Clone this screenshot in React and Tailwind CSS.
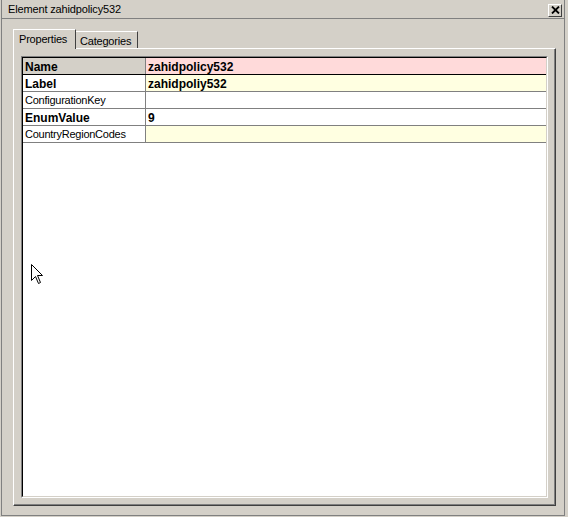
export default function App() {
  const rows = [
    { k: 'Name', v: 'zahidpolicy532', bold: true, kbg: 'bg-[#d4d0c8]', vbg: 'bg-[#ffdada]', line: 'border-black' },
    { k: 'Label', v: 'zahidpoliy532', bold: true, kbg: 'bg-white', vbg: 'bg-[#ffffe1]', line: 'border-[#808080]' },
    { k: 'ConfigurationKey', v: '', bold: false, kbg: 'bg-white', vbg: 'bg-white', line: 'border-[#808080]' },
    { k: 'EnumValue', v: '9', bold: true, kbg: 'bg-white', vbg: 'bg-white', line: 'border-[#808080]' },
    { k: 'CountryRegionCodes', v: '', bold: false, kbg: 'bg-white', vbg: 'bg-[#ffffe1]', line: 'border-[#808080]' },
  ];
  return (
    <div
      className="relative w-[568px] h-[517px] bg-[#d4d0c8] pl-[1px] pr-[3px] pb-[1px] text-[11px] text-black"
      style={{ fontFamily: '"Liberation Sans", Arial, sans-serif' }}
    >
      <div className="h-full border-l border-r border-b border-[#808080] flex flex-col">
        <div className="h-[19px] border-b border-[#808080] flex items-center justify-between pl-[6px] pr-[2px]">
          <span className="leading-none tracking-[-0.15px] pt-[1px]">Element zahidpolicy532</span>
          <div className="w-[14px] h-[13px] mt-[2px] border-t border-l border-white border-r border-b border-r-[#404040] border-b-[#404040] flex items-center justify-center">
            <svg width="9" height="8" viewBox="0 0 9 8">
              <path d="M1 0.5 L8 7.5 M8 0.5 L1 7.5" stroke="black" strokeWidth="1.8" />
            </svg>
          </div>
        </div>
        <div className="flex-1 flex flex-col pl-[11px] pr-[8px] pt-[10px] pb-[9px]">
          <div className="h-[19px] flex items-end">
            <div className="relative z-10 h-[20px] -mb-[1px] w-[63px] bg-[#d4d0c8] border-t border-l border-white border-r border-r-[#404040] flex items-start pt-[4px] pl-[5px]">
              <span className="leading-none tracking-[-0.2px]">Properties</span>
            </div>
            <div className="h-[17px] w-[62px] bg-[#d4d0c8] border-t border-white border-r border-r-[#404040] flex items-start pt-[4px] pl-[4px]">
              <span className="leading-none tracking-[-0.2px]">Categories</span>
            </div>
          </div>
          <div className="flex-1 flex border-t border-l border-white border-r border-b border-r-[#404040] border-b-[#404040]">
            <div className="flex-1 flex border-r border-b border-[#808080] pl-[7px] pr-[6px] pt-[7px] pb-[6px]">
              <div className="flex-1 flex border-t border-l border-[#808080] border-r border-b border-r-white border-b-white">
                <div className="flex-1 flex flex-col bg-white border-t border-l border-black border-r border-b border-r-[#d4d0c8] border-b-[#d4d0c8]">
                  {rows.map((r) => (
                    <div key={r.k} className={`flex h-[17px] border-b ${r.line}`}>
                      <div className={`w-[123px] border-r border-[#808080] pl-[2px] pt-[1px] flex items-center ${r.kbg} ${r.bold ? 'font-bold text-[12px]' : 'tracking-[-0.25px]'}`}>
                        <span className="leading-none">{r.k}</span>
                      </div>
                      <div className={`flex-1 pl-[2px] pt-[1px] flex items-center font-bold text-[12px] ${r.vbg}`}>
                        <span className="leading-none">{r.v}</span>
                      </div>
                    </div>
                  ))}
                </div>
              </div>
            </div>
          </div>
        </div>
      </div>
      <svg className="absolute left-[31px] top-[264px]" width="13" height="21" viewBox="0 0 13 21">
        <path d="M0.5 0.5 L0.5 16.5 L4.5 12.5 L7.5 19.5 L9.5 18.5 L6.5 11.5 L11.5 11.5 Z" fill="white" stroke="black" strokeWidth="1" />
      </svg>
    </div>
  );
}
